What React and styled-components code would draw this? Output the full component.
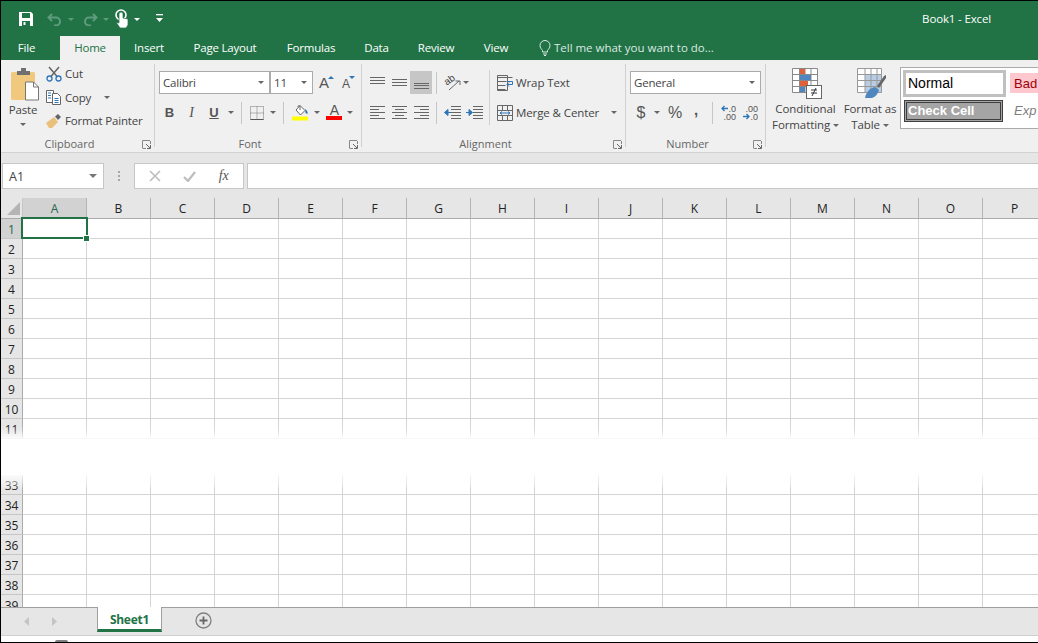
import React from 'react';
import styled, { createGlobalStyle } from 'styled-components';

const Global = createGlobalStyle`
  html, body { margin: 0; padding: 0; background: #fff; overflow: hidden; }
  #root { width: 1038px; height: 643px; }
`;
const FONT = `"Open Sans", "Noto Sans", "Liberation Sans", sans-serif`;
const ARIAL = `"Liberation Sans", sans-serif`;
const GREEN = '#217346';

const Frame = styled.div`
  width: 1038px; height: 643px; box-sizing: border-box; overflow: hidden;
  border-top: 1px solid #000; border-left: 1px solid #000; border-bottom: 1px solid #000;
  display: flex; flex-direction: column; font-family: ${FONT}; font-size: 12px; color: #444; background: #fff;
`;
const TitleBar = styled.div`
  height: 35px; flex: none; background: ${GREEN}; display: flex; align-items: center; padding: 0 47px 0 17px;
`;
const Qat = styled.div`display: flex; align-items: center;`;
const Title = styled.div`margin-left: auto; color: #fff; font-size: 11.5px; letter-spacing: -0.15px;`;
const TabRow = styled.div`
  height: 24px; flex: none; background: ${GREEN}; display: flex; align-items: stretch; padding-left: 16px;
`;
const Tab = styled.div`
  display: flex; align-items: center; justify-content: center; color: ${p => p.$active ? GREEN : '#fff'};
  background: ${p => p.$active ? '#f0f0f0' : 'transparent'}; margin-left: ${p => p.$ml || 0}px;
  width: ${p => p.$w}px; font-size: 11.5px; letter-spacing: -0.2px; padding-bottom: 1px; box-sizing: border-box;
`;
const TellMe = styled.div`
  display: flex; align-items: center; gap: 3px; margin-left: 16px; color: #dbe9e1; font-size: 11.5px; letter-spacing: -0.02px; padding-bottom: 1px;
`;
const Ribbon = styled.div`
  height: 93px; flex: none; background: #f0f0f0; border-bottom: 1px solid #d2d2d2; box-sizing: border-box; display: flex; padding-top: 4px;
`;
const Group = styled.div`
  width: ${p => p.$w}px; flex: none; height: 88px; box-sizing: border-box; display: flex; flex-direction: column; position: relative;
  &::after {
    content: ''; position: absolute; right: 0; top: 0; width: 1px; height: 83px; background: ${p => p.$last ? 'transparent' : '#d0d0d0'};
  }
`;
const GroupBody = styled.div`flex: 1; display: flex; min-height: 0; padding: ${p => p.$pad || '0'};`;
const GroupLabel = styled.div`
  height: 17px; flex: none; text-align: center; font-size: 11px; color: #666; line-height: 17px; padding-right: 17px;
`;
const Launcher = styled.svg`position: absolute; right: 4px; bottom: 3px;`;
const PasteCol = styled.div`
  width: 44px; flex: none; display: flex; flex-direction: column; align-items: center; padding-top: 4px;
`;
const PasteLabel = styled.div`font-size: 11.5px; margin-top: 1px; line-height: 16px; color: #444; letter-spacing: -0.2px;`;
const SmallCol = styled.div`display: flex; flex-direction: column; padding: 0 0 0 1px; margin-top: -2px;`;
const SmallBtn = styled.div`
  height: 23px; display: flex; align-items: center; gap: 3px; font-size: 11.5px; letter-spacing: -0.2px; color: #444; white-space: nowrap;
  padding-top: ${p => p.$pt || 0}px; box-sizing: content-box;
`;
const Rows = styled.div`display: flex; flex-direction: column; gap: 7px; padding-top: 7px;`;
const CtlRow = styled.div`display: flex; align-items: center; height: 23px; flex: none;`;
const Select = styled.div`
  height: 23px; width: ${p => p.$w}px; box-sizing: border-box; background: #fff; border: 1px solid #ababab; margin-right: ${p => p.$mr || 0}px;
  display: flex; align-items: center; justify-content: space-between; padding: 0 5px 0 3px; font-size: 11.5px; color: #444; letter-spacing: -0.2px; flex: none;
`;
const Caret = styled.i`
  display: inline-block; flex: none; width: 0; height: 0; border: 3px solid transparent; border-top: 3px solid ${p => p.$c || '#666'}; border-bottom: 0;
  margin: ${p => p.$m || '0'};
`;
const Glyph = styled.div`
  width: ${p => p.$w || 22}px; flex: none; height: 23px; display: flex; align-items: center; justify-content: center; box-sizing: border-box;
  font-family: ${p => p.$serif ? '"Liberation Serif", serif' : ARIAL}; font-size: ${p => p.$s || 13}px; font-weight: ${p => p.$b ? 700 : 400}; font-style: ${p => p.$i ? 'italic' : 'normal'};
  text-decoration: ${p => p.$u ? 'underline' : 'none'}; color: #555; background: ${p => p.$on ? '#c6c6c6' : 'transparent'};
  padding-bottom: ${p => p.$pb || 0}px;
`;
const GrowBtn = styled.div`
  width: ${p => p.$w}px; flex: none; height: 23px; display: flex; align-items: flex-end; padding-bottom: 4px; box-sizing: border-box;
  font-family: ${ARIAL}; font-size: ${p => p.$s}px; line-height: 1; color: #555; position: relative;
`;
const GrowTri = styled.i`
  position: absolute; top: 5px; left: ${p => p.$left}px; width: 0; height: 0; border-left: 3px solid transparent; border-right: 3px solid transparent;
  border-bottom: ${p => p.$up ? '3px solid #2e75b6' : '0'}; border-top: ${p => p.$up ? '0' : '3px solid #2e75b6'};
`;
const VSep = styled.i`display: block; flex: none; width: 1px; height: 22px; background: #c6c6c6; margin: ${p => p.$m || '0 4px'};`;
const AlignCol = styled.div`display: flex; flex-direction: column; gap: 7px; padding-top: 7px; width: 123px; flex: none; padding-left: 4px;`;
const BigSep = styled.i`display: block; flex: none; width: 1px; height: 55px; background: #d0d0d0; margin-top: 6px;`;
const WrapCol = styled.div`display: flex; flex-direction: column; gap: 7px; padding: 7px 0 0 7px;`;
const TextBtn = styled.div`
  height: 23px; flex: none; display: flex; align-items: center; gap: 3px; font-size: 11.5px; letter-spacing: -0.1px; color: #444; white-space: nowrap;
`;
const Orient = styled.div`width: 17px; height: 16px; position: relative; flex: none;`;
const OrientAb = styled.span`
  position: absolute; left: 0; top: 0; font-family: ${ARIAL}; font-size: 10px; line-height: 10px; color: #444; transform: rotate(-35deg);
`;
const DecBtn = styled.div`
  width: 16px; flex: none; display: flex; flex-direction: column; align-items: flex-end; font-family: ${ARIAL}; font-size: 9px; line-height: 8px; color: #555;
`;
const DecLine = styled.div`display: flex; align-items: center; gap: 0; height: 8px;`;
const BigBtn = styled.div`
  width: ${p => p.$w}px; flex: none; display: flex; flex-direction: column; align-items: center; padding-top: 4px; box-sizing: border-box; font-size: 11.5px; letter-spacing: -0.1px; line-height: 16px; color: #444;
`;
const BigText = styled.div`margin-top: 2px; text-align: center; white-space: nowrap;`;
const Gallery = styled.div`
  width: 138px; height: 62px; box-sizing: border-box; margin: 3px 0 0 5px; background: #fff; border: 1px solid #ababab; border-right: 0; overflow: hidden;
  display: grid; grid-template-columns: 109px 40px; grid-template-rows: 30px 30px; flex: none;
`;
const StyleCell = styled.div`
  display: flex; align-items: center; box-sizing: border-box; white-space: nowrap; overflow: hidden; font-family: ${ARIAL};
`;
const NormalCell = styled(StyleCell)`margin: 2px 4px 1px 2px; border: 3px solid #c0c0c0; padding: 0 0 2px 2px; font-size: 14px; color: #000;`;
const BadCell = styled(StyleCell)`margin: 5px 0 5px 0; background: #ffc7ce; color: #9c0006; padding-left: 4px; font-size: 13px;`;
const CheckCell = styled(StyleCell)`margin: 2px 7px 6px 3px; background: #a5a5a5; border: 3px double #3f3f3f; padding: 0 0 2px 1px; color: #fff; font-weight: 700; font-size: 13px;`;
const ExpCell = styled(StyleCell)`padding: 0 0 6px 4px; color: #7f7f7f; font-style: italic; font-size: 13px;`;

const FormulaArea = styled.div`
  height: 45px; flex: none; background: #e6e6e6; display: flex; align-items: flex-start; padding: 10px 0 0 1px; box-sizing: border-box;
`;
const NameBox = styled.div`
  width: 102px; height: 26px; box-sizing: border-box; background: #fff; border: 1px solid #c6c6c6; display: flex; align-items: center; justify-content: space-between; padding: 0 6px 0 6px; font-size: 12.5px; color: #444; flex: none;
`;
const Dots = styled.div`
  width: 30px; flex: none; height: 26px; display: flex; flex-direction: column; align-items: center; justify-content: center; gap: 2px;
  i { display: block; width: 2px; height: 2px; background: #a6a6a6; }
`;
const FxBox = styled.div`
  width: 110px; height: 26px; box-sizing: border-box; background: #fff; border: 1px solid #c6c6c6; flex: none; display: flex; align-items: center; justify-content: space-around; padding: 0 3px; color: #666;
`;
const Fx = styled.span`font-family: "Liberation Serif", serif; font-style: italic; font-size: 14px; color: #555;`;
const FormulaInput = styled.div`
  flex: 1; height: 26px; box-sizing: border-box; margin-left: 3px; background: #fff; border: 1px solid #c6c6c6; border-right: 0;
`;

const Sheet = styled.div`flex: 1; min-height: 0; overflow: hidden; position: relative; background: #fff;`;
const Row = styled.div`display: flex; height: 20px; width: 1100px; flex: none;`;
const HeaderRow = styled(Row)`background: #e6e6e6; border-bottom: 1px solid #ababab; box-sizing: content-box;`;
const Corner = styled.div`
  width: 22px; flex: none; box-sizing: border-box; border-right: 1px solid #c6c6c6; display: flex; align-items: flex-end; padding: 0 0 3px 6px;
`;
const ColHead = styled.div`
  width: 64px; flex: none; box-sizing: border-box; border-right: 1px solid #b4b4b4; text-align: center; line-height: 21px; font-size: 12px; color: ${p => p.$sel ? '#21674a' : '#222'};
  background: ${p => p.$sel ? '#d2d2d2' : 'transparent'};
`;
const RowHead = styled.div`
  width: 22px; flex: none; box-sizing: border-box; background: ${p => p.$sel ? '#d2d2d2' : '#e6e6e6'}; border-right: 1px solid #ababab; border-bottom: 1px solid #c6c6c6;
  text-align: center; line-height: 21px; font-size: 12px; color: ${p => p.$sel ? '#21674a' : '#222'}; overflow: hidden;
`;
const Cell = styled.div`
  width: 64px; flex: none; box-sizing: border-box; border-right: 1px solid #d4d4d4; border-bottom: 1px solid #d4d4d4; background: #fff;
`;
const Gap = styled.div`height: 36px; display: flex; background: #fff;`;
const GapHead = styled.div`width: 22px; text-align: center; font-size: 12px; line-height: 14px; color: #f0f0f0;`;
const Fade = styled.div`
  position: absolute; left: 0; right: 0; top: 227px; height: 65px; pointer-events: none;
  background: linear-gradient(#fff0 0, #ffffff30 5px, #ffffffd0 13px, #fff 20px, #fff 47px, #ffffffb0 52px, #ffffff70 58px, #fff0 65px);
`;
const Selection = styled.div`
  position: absolute; left: 20px; top: 19px; border: 2px solid ${GREEN}; width: 63px; height: 18px; pointer-events: none;
  &::after { content: ''; position: absolute; right: -3px; bottom: -4px; width: 5px; height: 5px; background: ${GREEN}; outline: 1px solid #fff; }
`;
const SheetBar = styled.div`
  height: 28px; flex: none; box-sizing: border-box; background: #e6e6e6; border-top: 1px solid #9f9f9f; display: flex; align-items: flex-start; padding-left: 11px;
`;
const NavBtn = styled.div`width: 28px; height: 24px; flex: none; display: flex; align-items: center; justify-content: center; padding-top: 1px;`;
const SheetTab = styled.div`
  width: 65px; height: 25px; box-sizing: border-box; margin: -1px 0 0 29px; background: #fff; border: 1px solid #9f9f9f; border-top: 0; border-bottom: 3px solid ${GREEN};
  color: ${GREEN}; font-weight: 700; font-size: 12px; text-align: center; line-height: 25px; letter-spacing: -0.25px; flex: none;
`;
const AddBtn = styled.div`margin: 4px 0 0 33px; width: 17px; height: 17px; flex: none;`;
const StatusBar = styled.div`
  height: 7px; flex: none; box-sizing: border-box; border-top: 1px solid #cfcfcf; padding: 4px 0 0 54px; background: #fff; display: flex; align-items: flex-start;
`;
const StatusMark = styled.i`display: block; width: 13px; height: 2px; background: #808080; border-radius: 2px 2px 0 0;`;

const Svg = ({ w, h, children, style }) => <svg width={w} height={h} viewBox={`0 0 ${w} ${h}`} fill="none" style={{ display: 'block', flex: 'none', ...style }}>{children}</svg>;

const SaveIcon = () => <Svg w={16} h={16}><path d="M1 1h12l2 2v12H1z" fill="#fff"/><rect x="4" y="2" width="8" height="5" fill={GREEN}/><rect x="4" y="10" width="8" height="5" fill={GREEN}/><rect x="5.5" y="11" width="2" height="3" fill="#fff"/></Svg>;
const UndoIcon = ({ flip, ml }) => <Svg w={15} h={14} style={{ transform: flip ? 'scaleX(-1)' : 'none', marginLeft: ml || 0 }}><path d="M5 2 1.5 5.5 5 9M2 5.5h7a4 4 0 0 1 0 8H7" stroke="#5f9b7d" strokeWidth="2"/></Svg>;
const TouchIcon = () => <Svg w={15} h={20}><circle cx="6" cy="6" r="5" stroke="#fff" strokeWidth="1.6"/><path d="M4 8V5a2 2 0 0 1 4 0v4l5 1v6l-2 3H5l-4-6 3 1z" fill="#fff" stroke={GREEN} strokeWidth=".7"/></Svg>;
const QatMore = () => <Svg w={7} h={9}><rect x="0" y="0" width="7" height="1.3" fill="#fff"/><path d="M0 4h7L3.5 8z" fill="#fff"/></Svg>;
const Bulb = () => <Svg w={12} h={16}><path d="M3.5 10.5C2.5 9 1 8 1 5.5a5 5 0 0 1 10 0C11 8 9.500 9 8.500 10.500v1.500h-5zM4 14h4M5 15.500h2" stroke="#dbe9e1" strokeWidth="1"/></Svg>;
const LauncherIcon = () => <Launcher width="9" height="9" viewBox="0 0 9 9" fill="none"><path d="M.5 8V.5H8" stroke="#888"/><path d="M8.500 1v3M.5 8.500H4" stroke="#888"/><path d="M4 4l4 4M5 8.500h3.500V5" stroke="#666"/></Launcher>;

const PasteIcon = () => <Svg w={28} h={33} style={{ marginLeft: 4 }}>
  <rect x="0" y="4" width="24" height="28" rx="1.500" fill="#f0c97f"/>
  <path d="M6 7V3h4V0h5v3h4v4z" fill="#707070"/>
  <path d="M14.500 14h8l5 5v13h-13z" fill="#fff" stroke="#777"/><path d="M22.500 14v5h5" stroke="#777"/>
</Svg>;
const CutIcon = () => <Svg w={16} h={16}><path d="M3 1l8.500 10M13 1 4.500 11" stroke="#666" strokeWidth="1.500"/><circle cx="3.500" cy="12.500" r="2.500" stroke="#2e75b6" strokeWidth="1.300"/><circle cx="12.500" cy="12.500" r="2.500" stroke="#2e75b6" strokeWidth="1.300"/></Svg>;
const CopyIcon = () => <Svg w={16} h={15}><path d="M.5.5h7l0 12H.5z" fill="#fff" stroke="#666"/><path d="M6.500 3.500h5l3 3v8h-8z" fill="#fff" stroke="#666"/><path d="M2 3h3M2 5.500h3M2 8h3M8.500 8.500h4M8.500 10.500h4M8.500 12.500h4" stroke="#2e75b6"/></Svg>;
const PainterIcon = () => <Svg w={16} h={14}><path d="M0 9 8 3l4 5-6 6H3z" fill="#e9c07c"/><path d="M9 2.500 12 0l3 3-3 3z" fill="#666"/></Svg>;

const BorderIcon = () => <Svg w={14} h={14}><path d="M.5.5h13v13H.5zM7 .5v13M.5 7h13" stroke="#777" strokeDasharray="1 1"/><path d="M.5 13.500h13" stroke="#555"/></Svg>;
const FillIcon = () => <Svg w={17} h={17}><path d="M4 6 8 1.500l5 5L8.500 11z" fill="#fff" stroke="#666"/><path d="M6 3c0-2 2-2 2 0v3" stroke="#666"/><path d="M13 5c2 1 3 3 2.500 5l-2-1z" fill="#2e75b6"/><rect x="0" y="12.500" width="16" height="4" fill="#ffff00"/></Svg>;
const ColorBar = styled.div`
  width: 17px; height: 23px; flex: none; box-sizing: border-box; position: relative; text-align: center; font-family: ${ARIAL}; font-size: 14px; line-height: 19px; color: #555;
  &::after { content: ''; position: absolute; left: 0; top: 15px; width: 16px; height: 4px; background: #ff0000; }
`;

const Lines = ({ d }) => <Svg w={15} h={13}>{d.map((l, i) => <path key={i} d={`M${l[0]} ${l[2] + .5}H${l[1]}`} stroke="#666"/>)}</Svg>;
const IndentIcon = ({ inward }) => <Svg w={17} h={13}>
  <path d="M7 .5h10M7 3.500h10M7 6.500h10M7 9.500h10M7 12.500h10" stroke="#666"/>
  <path d={inward ? 'M0 6.500h5M3 3.500l3.500 3-3.500 3z' : 'M2 6.500h5M4 3.500.5 6.500l3.500 3z'} stroke="#2e75b6" fill="#2e75b6"/>
</Svg>;
const WrapIcon = () => <Svg w={16} h={16}><path d="M.5 2.500h15M.5 6.500h9M.5 10.500h8M.5 14.500h8" stroke="#666"/><path d="M.5.5h10v15H.5z" stroke="#666"/><path d="M11 6.500h4.500v3H10M12 7.500 10 9.500l2 2" stroke="#2e75b6"/></Svg>;
const MergeIcon = () => <Svg w={16} h={16}><path d="M.5.5h15v15H.5zM.5 5.500h15M.5 10.500h15M5.500.5v5M5.500 10.500v5M10.500.5v5M10.500 10.500v5" stroke="#666"/><path d="M3 8h10M5 6.500 3 8l2 1.500M11 6.500 13 8l-2 1.500" stroke="#2e75b6"/></Svg>;
const OrientArrow = () => <Svg w={12} h={11} style={{ position: 'absolute', left: 5, top: 5 }}><path d="M0 10 10 1M6.500 1H11V5" stroke="#666"/></Svg>;
const DecArrow = ({ right }) => <Svg w={7} h={7}><path d={right ? 'M0 3.500h6M3.500 1 6 3.500 3.500 6' : 'M7 3.500H1M3.500 1 1 3.500 3.500 6'} stroke="#2e75b6" strokeWidth="1.300"/></Svg>;
const CondIcon = () => <Svg w={30} h={31} style={{ marginLeft: 3 }}>
  <path d="M.5.500h25v24H.5zM.5 6.500h25M.5 12.500h25M.5 18.500h25M7.500.500v24M13 .500v24M19 .500v24" stroke="#888" fill="#fff"/>
  <rect x="8" y="1" width="5" height="5" fill="#e0603a"/><rect x="8" y="7" width="11" height="5" fill="#4f86c0"/><rect x="8" y="13" width="8" height="5" fill="#e0603a"/><rect x="8" y="19" width="5" height="5" fill="#4f86c0"/>
  <rect x="14.500" y="17.500" width="15" height="13" fill="#fff" stroke="#666"/><path d="M19 22h6M19 25h6M24 20l-4 8" stroke="#333"/>
</Svg>;
const TableIcon = () => <Svg w={30} h={31} style={{ marginLeft: 3 }}>
  <path d="M.5 .500h24v24H.5z" fill="#fff"/>
  <rect x="8" y="7" width="17" height="18" fill="#b8cce4"/>
  <path d="M.500.500h24v24H.5zM.5 6.500h24M.5 12.500h24M.5 18.500h24M8 .500v24M14 .500v24M20 .500v24" stroke="#999"/>
  <path d="M20 18 27 8l2-1v3l-7 10z" fill="#666"/><path d="M8 30c1-6 5-10 10-11l4 3c-1 4-4 7-7 8z" fill="#4f86c0"/>
</Svg>;
const X = () => <Svg w={12} h={12}><path d="M1 1l10 10M11 1 1 11" stroke="#bdbdbd" strokeWidth="1.600"/></Svg>;
const Check = () => <Svg w={13} h={11}><path d="M1 6l4 4 7-9" stroke="#bdbdbd" strokeWidth="2.200"/></Svg>;

const cols = 'ABCDEFGHIJKLMNOP'.split('');
const GridRow = ({ n, sel }) => (
  <Row>
    <RowHead $sel={sel}>{n}</RowHead>
    {cols.map(c => <Cell key={c} />)}
  </Row>
);

export default function App() {
  return (
    <Frame>
      <Global />
      <TitleBar>
        <Qat>
          <SaveIcon />
          <UndoIcon ml={13} /><Caret $c="#5f9b7d" $m="2px 9px 0 6px" />
          <UndoIcon flip /><Caret $c="#5f9b7d" $m="2px 6px 0 5px" />
          <TouchIcon /><Caret $c="#fff" $m="2px 16px 0 4px" />
          <QatMore />
        </Qat>
        <Title>Book1 - Excel</Title>
      </TitleBar>
      <TabRow>
        <Tab $w={19}>File</Tab>
        <Tab $w={60} $ml={24} $active>Home</Tab>
        <Tab $w={58}>Insert</Tab>
        <Tab $w={94}>Page Layout</Tab>
        <Tab $w={78}>Formulas</Tab>
        <Tab $w={53}>Data</Tab>
        <Tab $w={66}>Review</Tab>
        <Tab $w={54}>View</Tab>
        <TellMe><Bulb />Tell me what you want to do...</TellMe>
      </TabRow>
      <Ribbon>
        <Group $w={154}>
          <GroupBody>
            <PasteCol>
              <PasteIcon />
              <PasteLabel>Paste</PasteLabel>
              <Caret $m="5px 0 0" />
            </PasteCol>
            <SmallCol>
              <SmallBtn><CutIcon />Cut</SmallBtn>
              <SmallBtn $pt={1}><CopyIcon />Copy<Caret $m="0 0 0 10px" /></SmallBtn>
              <SmallBtn><PainterIcon />Format Painter</SmallBtn>
            </SmallCol>
          </GroupBody>
          <GroupLabel>Clipboard</GroupLabel>
          <LauncherIcon />
        </Group>
        <Group $w={207}>
          <GroupBody $pad="0 0 0 4px">
            <Rows>
              <CtlRow>
                <Select $w={111}>Calibri<Caret /></Select>
                <Select $w={43} $mr={6}>11<Caret /></Select>
                <GrowBtn $w={23} $s={15}>A<GrowTri $up $left={9} /></GrowBtn>
                <GrowBtn $w={20} $s={12}>A<GrowTri $left={7} /></GrowBtn>
              </CtlRow>
              <CtlRow>
                <Glyph $b $w={21}>B</Glyph>
                <Glyph $i $s={14} $serif $w={23}>I</Glyph>
                <Glyph $u $b $w={22}>U</Glyph>
                <Caret $m="0 7px 0 3px" />
                <VSep $m="0 8px 0 0" />
                <BorderIcon />
                <Caret $m="0 7px 0 6px" />
                <VSep $m="0 8px 0 0" />
                <FillIcon />
                <Caret $m="0 6px 0 5px" />
                <ColorBar>A</ColorBar>
                <Caret $m="0 0 0 4px" />
              </CtlRow>
            </Rows>
          </GroupBody>
          <GroupLabel>Font</GroupLabel>
          <LauncherIcon />
        </Group>
        <Group $w={264}>
          <GroupBody>
            <AlignCol>
              <CtlRow>
                <Glyph $w={22}><Lines d={[[0, 15, 1], [0, 15, 4], [0, 15, 7]]} /></Glyph>
                <Glyph $w={22}><Lines d={[[0, 15, 3], [0, 15, 6], [0, 15, 9]]} /></Glyph>
                <Glyph $w={22} $on><Lines d={[[0, 15, 7], [0, 15, 9], [0, 15, 12]]} /></Glyph>
                <VSep $m="0 7px 0 4px" />
                <Orient><OrientAb>ab</OrientAb><OrientArrow /></Orient><Caret $m="0 0 0 2px" />
              </CtlRow>
              <CtlRow>
                <Glyph $w={22}><Lines d={[[0, 15, 0], [0, 9, 3], [0, 15, 6], [0, 9, 9], [0, 15, 12]]} /></Glyph>
                <Glyph $w={22}><Lines d={[[0, 15, 0], [3, 12, 3], [0, 15, 6], [3, 12, 9], [0, 15, 12]]} /></Glyph>
                <Glyph $w={22}><Lines d={[[0, 15, 0], [6, 15, 3], [0, 15, 6], [6, 15, 9], [0, 15, 12]]} /></Glyph>
                <VSep $m="0 7px 0 4px" />
                <IndentIcon />
                <Glyph $w={5} />
                <IndentIcon inward />
              </CtlRow>
            </AlignCol>
            <BigSep />
            <WrapCol>
              <TextBtn><WrapIcon />Wrap Text</TextBtn>
              <TextBtn><MergeIcon />Merge &amp; Center<Caret $m="0 0 0 9px" /></TextBtn>
            </WrapCol>
          </GroupBody>
          <GroupLabel>Alignment</GroupLabel>
          <LauncherIcon />
        </Group>
        <Group $w={140}>
          <GroupBody $pad="0 0 0 4px">
            <Rows>
              <CtlRow>
                <Select $w={131}>General<Caret /></Select>
              </CtlRow>
              <CtlRow>
                <Glyph $w={22} $s={16}>$</Glyph>
                <Caret $m="0 4px 0 2px" />
                <Glyph $w={22} $s={16}>%</Glyph>
                <Glyph $w={20} $s={15} $b $pb={7}>,</Glyph>
                <VSep $m="0 7px 0 6px" />
                <DecBtn>
                  <DecLine><DecArrow />.0</DecLine>
                  <DecLine>.00</DecLine>
                </DecBtn>
                <Glyph $w={6} />
                <DecBtn>
                  <DecLine>.00</DecLine>
                  <DecLine><DecArrow right />.0</DecLine>
                </DecBtn>
              </CtlRow>
            </Rows>
          </GroupBody>
          <GroupLabel>Number</GroupLabel>
          <LauncherIcon />
        </Group>
        <Group $w={272} $last>
          <GroupBody>
            <BigBtn $w={79}>
              <CondIcon />
              <BigText>Conditional<br />Formatting <Caret $m="0 0 2px 0" /></BigText>
            </BigBtn>
            <BigBtn $w={50}>
              <TableIcon />
              <BigText>Format as<br />Table <Caret $m="0 0 2px 0" /></BigText>
            </BigBtn>
            <Gallery>
              <NormalCell>Normal</NormalCell>
              <BadCell>Bad</BadCell>
              <CheckCell>Check Cell</CheckCell>
              <ExpCell>Exp</ExpCell>
            </Gallery>
          </GroupBody>
        </Group>
      </Ribbon>
      <FormulaArea>
        <NameBox>A1<Caret $c="#777" style={{ borderWidth: '4px 4px 0' }} /></NameBox>
        <Dots><i /><i /><i /></Dots>
        <FxBox><X /><Check /><Fx>fx</Fx></FxBox>
        <FormulaInput />
      </FormulaArea>
      <Sheet>
        <HeaderRow>
          <Corner><Svg w={13} h={13}><path d="M13 0v13H0z" fill="#b5b5b5"/></Svg></Corner>
          {cols.map((c, i) => <ColHead key={c} $sel={i === 0}>{c}</ColHead>)}
        </HeaderRow>
        {[1, 2, 3, 4, 5, 6, 7, 8, 9, 10, 11].map(n => <GridRow key={n} n={n} sel={n === 1} />)}
        <Gap><GapHead>12</GapHead></Gap>
        {[33, 34, 35, 36, 37, 38, 39].map(n => <GridRow key={n} n={n} />)}
        <Fade />
        <Selection />
      </Sheet>
      <SheetBar>
        <NavBtn><Svg w={5} h={9}><path d="M5 0v9L0 4.500z" fill="#c4c4c4"/></Svg></NavBtn>
        <NavBtn><Svg w={5} h={9}><path d="M0 0v9l5-4.500z" fill="#c4c4c4"/></Svg></NavBtn>
        <SheetTab>Sheet1</SheetTab>
        <AddBtn><Svg w={17} h={17}><circle cx="8.500" cy="8.500" r="7.500" stroke="#808080" strokeWidth="1.300"/><path d="M8.500 4.500v8M4.500 8.500h8" stroke="#666" strokeWidth="1.800"/></Svg></AddBtn>
      </SheetBar>
      <StatusBar><StatusMark /></StatusBar>
    </Frame>
  );
}
